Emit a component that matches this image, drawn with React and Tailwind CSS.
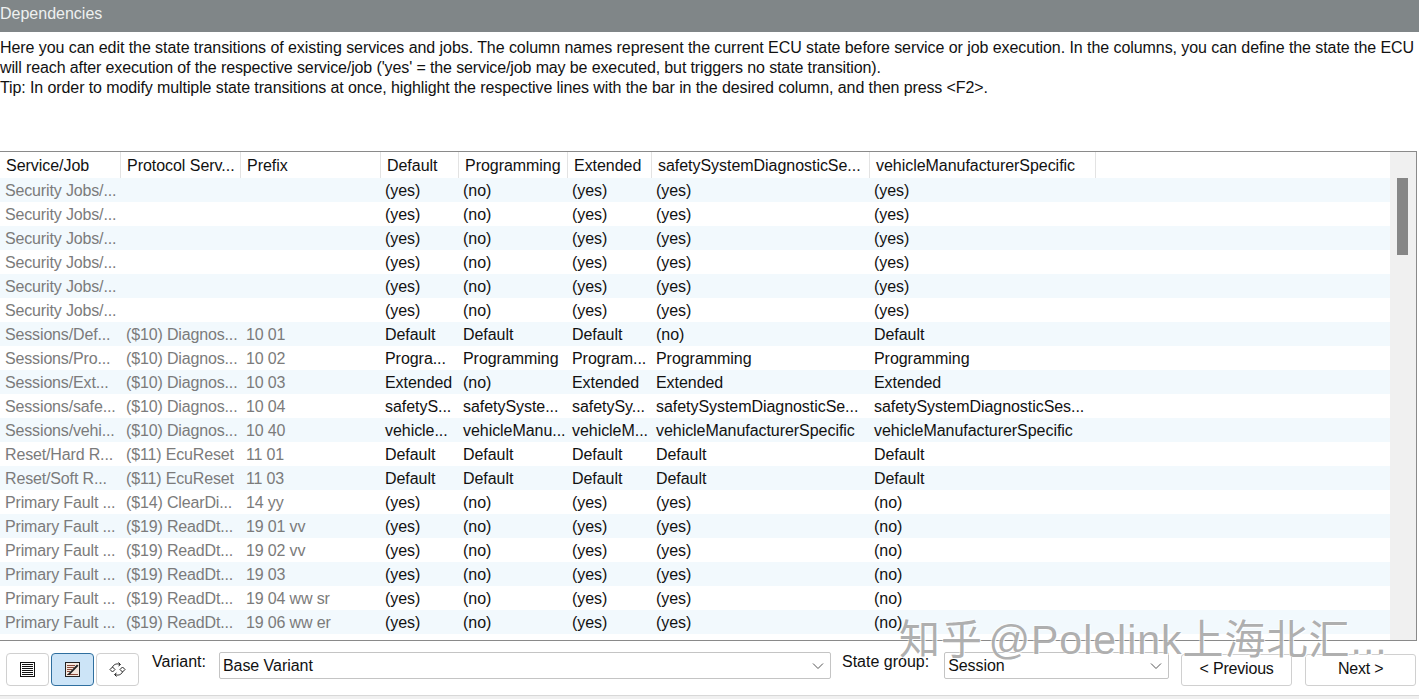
const colsClass = "grid grid-cols-[121px_120px_140px_78px_109px_84px_218px_226px]";

const yesRow = ["(yes)", "(no)", "(yes)", "(yes)", "(yes)"];
const faultRow = ["(yes)", "(no)", "(yes)", "(yes)", "(no)"];
const defaults = ["Default", "Default", "Default", "Default", "Default"];

const rows = [
  ["Security Jobs/...", "", "", ...yesRow],
  ["Security Jobs/...", "", "", ...yesRow],
  ["Security Jobs/...", "", "", ...yesRow],
  ["Security Jobs/...", "", "", ...yesRow],
  ["Security Jobs/...", "", "", ...yesRow],
  ["Security Jobs/...", "", "", ...yesRow],
  ["Sessions/Def...", "($10) Diagnos...", "10 01", "Default", "Default", "Default", "(no)", "Default"],
  ["Sessions/Pro...", "($10) Diagnos...", "10 02", "Progra...", "Programming", "Program...", "Programming", "Programming"],
  ["Sessions/Ext...", "($10) Diagnos...", "10 03", "Extended", "(no)", "Extended", "Extended", "Extended"],
  ["Sessions/safe...", "($10) Diagnos...", "10 04", "safetyS...", "safetySyste...", "safetySy...", "safetySystemDiagnosticSe...", "safetySystemDiagnosticSes..."],
  ["Sessions/vehi...", "($10) Diagnos...", "10 40", "vehicle...", "vehicleManu...", "vehicleM...", "vehicleManufacturerSpecific", "vehicleManufacturerSpecific"],
  ["Reset/Hard R...", "($11) EcuReset", "11 01", ...defaults],
  ["Reset/Soft R...", "($11) EcuReset", "11 03", ...defaults],
  ["Primary Fault ...", "($14) ClearDi...", "14 yy", ...faultRow],
  ["Primary Fault ...", "($19) ReadDt...", "19 01 vv", ...faultRow],
  ["Primary Fault ...", "($19) ReadDt...", "19 02 vv", ...faultRow],
  ["Primary Fault ...", "($19) ReadDt...", "19 03", ...faultRow],
  ["Primary Fault ...", "($19) ReadDt...", "19 04 ww sr", ...faultRow],
  ["Primary Fault ...", "($19) ReadDt...", "19 06 ww er", ...faultRow],
];

const headers = ["Service/Job", "Protocol Serv...", "Prefix", "Default", "Programming", "Extended", "safetySystemDiagnosticSe...", "vehicleManufacturerSpecific"];

function ListIcon() {
  return (
    <svg width="15" height="15" viewBox="0 0 15 15" fill="none">
      <rect x="0.5" y="0.5" width="14" height="14" fill="#fff" stroke="#111" />
      <path d="M2 2.500h11M2 4.500h11M2 6.500h11M2 8.500h11M2 10.500h11M2 12.500h11" stroke="#111" />
    </svg>
  );
}

function EditIcon() {
  return (
    <svg width="15" height="15" viewBox="0 0 15 15" fill="none">
      <rect x="0.5" y="0.5" width="14" height="14" fill="#f4e8de" stroke="#222" />
      <path d="M2 3.500h8M2 5.500h7M2 7.500h5M2 9.500h3M2 12.500h11" stroke="#8a4a3a" />
      <path d="M3 12l9-9.500 1.500 1.200-9 9.300L2.500 13z" fill="#222" />
    </svg>
  );
}

function CycleIcon() {
  return (
    <svg width="17" height="17" viewBox="0 0 17 17" fill="none" stroke="#222">
      <path d="M3.500 6l2.500 2.500L3.500 11 1 8.500z" fill="#fff" />
      <path d="M13.500 6L16 8.500 13.500 11 11 8.500z" fill="#fff" />
      <path d="M3.500 6C4.500 3.500 8 2 11 3.500" />
      <path d="M13.500 11C12.500 13.500 9 15 6 13.500" />
      <path d="M9.500 1.500L11.500 3.500 9.500 5M7.500 12L5.500 13.500 7.500 15.500" />
    </svg>
  );
}

function Chevron() {
  return (
    <svg width="12" height="8" viewBox="0 0 12 8" fill="none" stroke="#555">
      <path d="M1 1.500l5 5 5-5" />
    </svg>
  );
}

function ToolButton({ active, children }) {
  return (
    <button
      className={
        active
          ? "w-[43px] h-[33px] flex items-center justify-center rounded-[4px] border border-[#2f6f9f] bg-[#cce4f7]"
          : "w-[43px] h-[33px] flex items-center justify-center rounded-[4px] border border-[#d0d0d0] bg-white"
      }
    >
      {children}
    </button>
  );
}

function Select({ value, className }) {
  return (
    <div className={"h-[27px] flex items-center justify-between pl-[3px] pr-[6px] border border-[#c4c4c4] rounded-[2px] bg-white tracking-[-0.05px] " + className}>
      <span>{value}</span>
      <Chevron />
    </div>
  );
}

export default function App() {
  return (
    <div className="relative w-[1419px] h-[699px] overflow-hidden bg-white flex flex-col text-[16px] leading-[20px] text-[#111] font-['Liberation_Sans',sans-serif]">
      <div className="h-[32px] shrink-0 bg-[#808688] text-[#eef0f0] pb-[5px] flex items-center">Dependencies</div>

      <div className="h-[119px] shrink-0 pt-[6px] whitespace-nowrap">
        <p className="tracking-[-0.065px]">Here you can edit the state transitions of existing services and jobs. The column names represent the current ECU state before service or job execution. In the columns, you can define the state the ECU</p>
        <p className="tracking-[-0.12px]">will reach after execution of the respective service/job ('yes' = the service/job may be executed, but triggers no state transition).</p>
        <p className="tracking-[-0.1px]">Tip: In order to modify multiple state transitions at once, highlight the respective lines with the bar in the desired column, and then press &lt;F2&gt;.</p>
      </div>

      <div className="h-[490px] shrink-0 mr-[2px] border-t border-r border-b border-[#8a8a8a] flex overflow-hidden">
        <div className="w-[1390px] shrink-0">
          <div className={colsClass + " h-[26px]"}>
            {headers.map((h) => (
              <div key={h} className="pl-[6px] pt-[2px] flex items-center border-r border-[#e3e3e3] whitespace-nowrap overflow-hidden tracking-[-0.04px]">{h}</div>
            ))}
          </div>
          {rows.map((row, i) => (
            <div key={i} className={i % 2 === 0 ? colsClass + " h-[24px] pt-[2px] items-center bg-[#f2f9fd]" : colsClass + " h-[24px] pt-[2px] items-center"}>
              {row.map((cell, j) => (
                <div key={j} className={j < 3 ? "pl-[5px] whitespace-nowrap text-[#7b7b7b] tracking-[-0.15px]" : "pl-[4px] whitespace-nowrap tracking-[-0.05px]"}>{cell}</div>
              ))}
            </div>
          ))}
        </div>
        <div className="flex-1 bg-[#f0f0f0] pt-[26px] pl-[7px]">
          <div className="w-[11px] h-[77px] bg-[#868686]"></div>
        </div>
      </div>

      <div className="flex-1 flex items-start pt-[11px] pl-[6px]">
        <div className="flex gap-[2px] pt-[1px]">
          <ToolButton><ListIcon /></ToolButton>
          <ToolButton active><EditIcon /></ToolButton>
          <ToolButton><CycleIcon /></ToolButton>
        </div>
        <span className="ml-[13px] mr-[13px]">Variant:</span>
        <Select value="Base Variant" className="w-[612px]" />
        <span className="ml-[11px] mr-[15px] whitespace-nowrap">State group:</span>
        <Select value="Session" className="w-[225px]" />
        <button className="ml-[12px] mt-[2px] w-[111px] h-[32px] pb-[2px] border border-[#d0d0d0] rounded-[3px] bg-white tracking-[-0.2px]">&lt; Previous</button>
        <button className="ml-[13px] mt-[2px] w-[111px] h-[32px] pb-[2px] border border-[#d0d0d0] rounded-[3px] bg-white tracking-[-0.2px]">Next &gt;</button>
      </div>
      <div className="h-[4px] shrink-0 bg-[#f0f0f0] border-t border-[#d8d8d8]"></div>

      <div className="absolute left-[899px] top-[616px] text-[41px] leading-[48px] whitespace-nowrap tracking-[1px] [word-spacing:-7px] text-[#9a9a9a]/80 [text-shadow:1px_1px_0_rgba(255,255,255,0.9),-1px_-1px_0_rgba(255,255,255,0.5)] font-['Liberation_Sans','Noto_Sans_CJK_SC',sans-serif]">
        知乎 @Polelink上海北汇...
      </div>
    </div>
  );
}
